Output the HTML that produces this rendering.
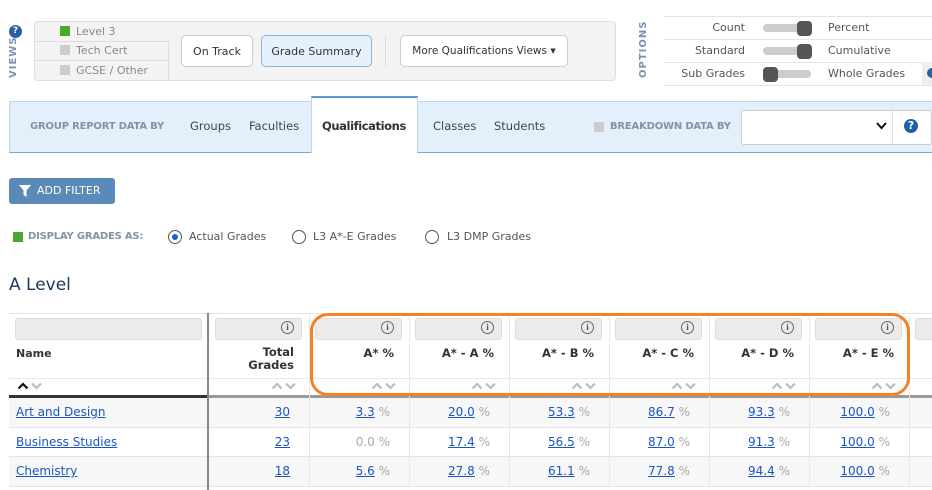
<!DOCTYPE html>
<html><head><meta charset="utf-8"><style>
*{box-sizing:border-box;margin:0;padding:0}
body{width:932px;height:490px;overflow:hidden;background:#fff;font-family:Verdana,"DejaVu Sans",sans-serif;font-size:11px;color:#333;position:relative}
.a{position:absolute}
.vt{position:absolute;transform:rotate(-90deg);transform-origin:left top;font-weight:bold;color:#7b93b3;font-size:10px;letter-spacing:1px}
.btn{position:absolute;top:35px;height:32px;border:1px solid #ccc;border-radius:5px;background:#fff;display:flex;align-items:center;justify-content:center;font-size:11px;color:#333}
.row3{position:absolute;left:664px;width:268px;height:23px;border-top:1px solid #e4e4e4}
.lbl{position:absolute;right:187px;top:4px;color:#555}
.tg{position:absolute;left:99px;top:7px;width:48px;height:8px;border-radius:4px;background:#ccc}
.kn{position:absolute;top:-3px;width:15px;height:15px;border-radius:4px;background:#555}
.rl{position:absolute;left:164px;top:4px;color:#555}
.tab{position:absolute;top:119px;color:#444;font-size:11.5px}
.sq{position:absolute;width:10px;height:10px}
.radio{position:absolute;top:230px;width:14px;height:14px;border-radius:50%;border:1px solid #555;background:#fff}
.col{position:absolute;top:313px;height:173px;border-left:1px solid #e8e8e8}
.fb{position:absolute;top:318px;height:22px;background:#ebebeb;border:1px solid #ddd;border-radius:3px}
.ic{position:absolute;top:321px;width:13px;height:13px;border:1px solid #666;border-radius:50%;font:bold 9px "Liberation Serif",serif;color:#555;text-align:center;line-height:11px}
.ht{position:absolute;top:346px;font-weight:bold;font-size:11.5px;color:#333;text-align:right}
.ar{position:absolute;top:382px}
.v{position:absolute;text-align:right;font-size:12px}
.v a{color:#1a56c4;text-decoration:underline}
.v span{color:#aaa}
.nm{position:absolute;left:16px;font-size:12px;color:#1a56c4;text-decoration:underline}
.bl{font-weight:bold;color:#8492a3;font-size:10px}
</style></head><body>

<div class="a" style="left:9px;top:25px;width:13px;height:13px;border-radius:50%;background:#2c5f9e;color:#fff;font-size:9px;font-weight:bold;text-align:center;line-height:13px">?</div>
<div class="vt" style="left:8px;top:78px">VIEWS</div>
<div class="a" style="left:34px;top:21px;width:582px;height:60px;background:#f3f3f3;border:1px solid #ddd;border-radius:4px"></div>
<div class="a" style="left:35px;top:41px;width:134px;height:1px;background:#ddd"></div>
<div class="a" style="left:35px;top:60px;width:134px;height:1px;background:#ddd"></div>
<div class="a" style="left:168px;top:41px;width:1px;height:39px;background:#ddd"></div>
<div class="sq" style="left:60px;top:26px;background:#4aa82a"></div>
<div class="a" style="left:76px;top:25px;color:#888">Level 3</div>
<div class="sq" style="left:60px;top:45px;background:#ccc"></div>
<div class="a" style="left:76px;top:44px;color:#888">Tech Cert</div>
<div class="sq" style="left:60px;top:65px;background:#ccc"></div>
<div class="a" style="left:76px;top:64px;color:#888">GCSE / Other</div>
<div class="btn" style="left:181px;width:72px">On Track</div>
<div class="btn" style="left:261px;width:111px;background:#e6f1fc;border-color:#8ab4e8">Grade Summary</div>
<div class="a" style="left:385px;top:35px;width:1px;height:32px;background:#ddd"></div>
<div class="btn" style="left:400px;width:168px;font-size:10.5px">More Qualifications Views&nbsp;<span style="font-size:7px">▼</span></div>

<div class="vt" style="left:638px;top:78px">OPTIONS</div>
<div class="row3" style="top:16px"><div class="lbl">Count</div><div class="tg"><div class="kn" style="left:34px"></div></div><div class="rl">Percent</div></div>
<div class="row3" style="top:39px"><div class="lbl">Standard</div><div class="tg"><div class="kn" style="left:34px"></div></div><div class="rl">Cumulative</div></div>
<div class="row3" style="top:62px"><div class="lbl">Sub Grades</div><div class="tg"><div class="kn" style="left:0"></div></div><div class="rl">Whole Grades</div></div>
<div class="a" style="left:664px;top:85px;width:268px;height:1px;background:#e4e4e4"></div>
<div class="a" style="left:922px;top:62px;width:10px;height:23px;background:#eee"></div>
<div class="a" style="left:927px;top:68px;width:10px;height:10px;border-radius:50%;background:#2c5f9e"></div>

<div class="a" style="left:9px;top:101px;width:923px;height:52px;background:#e3f0fc;border-top:1px solid #bcd7f0;border-left:1px solid #bcd7f0;border-bottom:1px solid #7aa7db"></div>
<div class="a bl" style="left:30px;top:121px;letter-spacing:-0.2px">GROUP REPORT DATA BY</div>
<div class="tab" style="left:190px">Groups</div>
<div class="tab" style="left:249px">Faculties</div>
<div class="a" style="left:311px;top:96px;width:107px;height:57px;background:#fff;border-top:2px solid #5b96d8;border-left:1px solid #bcd7f0;border-right:1px solid #bcd7f0"></div>
<div class="tab" style="left:322px;font-weight:bold;color:#333;letter-spacing:-0.4px">Qualifications</div>
<div class="tab" style="left:433px">Classes</div>
<div class="tab" style="left:494px">Students</div>
<div class="sq" style="left:594px;top:122px;background:#ccc"></div>
<div class="a bl" style="left:610px;top:121px;letter-spacing:-0.2px">BREAKDOWN DATA BY</div>
<div class="a" style="left:741px;top:110px;width:191px;height:35px;background:#fff;border:1px solid #ccc;border-radius:3px"></div>
<svg class="a" style="left:876px;top:122px" width="11" height="8"><path d="M1 1l4.5 5 4.5-5" stroke="#111" stroke-width="2" fill="none"/></svg>
<div class="a" style="left:892px;top:111px;width:1px;height:33px;background:#ddd"></div>
<div class="a" style="left:904px;top:119px;width:14px;height:14px;border-radius:50%;background:#1f5fa8;color:#fff;font-weight:bold;font-size:11px;text-align:center;line-height:14px">?</div>

<div class="a" style="left:9px;top:178px;width:106px;height:26px;background:#5a8ab8;border-radius:3px"></div>
<svg class="a" style="left:19px;top:185px" width="12" height="12"><path d="M0 0h12L7.5 5.5V12L4.5 10V5.5z" fill="#fff"/></svg>
<div class="a" style="left:37px;top:184px;color:#fff;font-size:11px">ADD FILTER</div>

<div class="sq" style="left:13px;top:232px;background:#4aa82a"></div>
<div class="a bl" style="left:28px;top:231px;letter-spacing:-0.2px">DISPLAY GRADES AS:</div>
<div class="radio" style="left:168px"><div class="a" style="left:3px;top:3px;width:6px;height:6px;border-radius:50%;background:#1f5fcf"></div></div>
<div class="a" style="left:189px;top:230px;color:#555;font-size:11px">Actual Grades</div>
<div class="radio" style="left:292px"></div>
<div class="a" style="left:313px;top:230px;color:#555;font-size:11px">L3 A*-E Grades</div>
<div class="radio" style="left:425px"></div>
<div class="a" style="left:447px;top:230px;color:#555;font-size:11px">L3 DMP Grades</div>

<div class="a" style="left:9px;top:275px;font-size:17px;color:#1a3a5c">A Level</div>

<div class="a" style="left:9px;top:313px;width:923px;height:1px;background:#e4e4e4"></div>
<div class="a" style="left:9px;top:378px;width:923px;height:1px;background:#e8e8e8"></div>
<div class="a" style="left:9px;top:398px;width:923px;height:29px;background:#f7f7f7"></div>
<div class="a" style="left:9px;top:456px;width:923px;height:30px;background:#f7f7f7"></div>
<div class="a" style="left:9px;top:427px;width:923px;height:1px;background:#e4e4e4"></div>
<div class="a" style="left:9px;top:456px;width:923px;height:1px;background:#e4e4e4"></div>
<div class="a" style="left:9px;top:486px;width:923px;height:1px;background:#e4e4e4"></div>
<div class="a" style="left:9px;top:395px;width:198px;height:3px;background:#333"></div>
<div class="a" style="left:209px;top:395px;width:723px;height:3px;background:#999"></div>
<div class="a" style="left:207px;top:313px;width:2px;height:177px;background:#888"></div>

<div class="fb" style="left:15px;width:187px"></div>
<div class="a" style="left:16px;top:347px;font-weight:bold;font-size:11px">Name</div>
<svg class="ar" style="left:17px" width="26" height="8"><path d="M1.5 6.5L6 2l4.5 4.5" stroke="#111" stroke-width="2.2" fill="none"/><path d="M15 1.5l4.5 4.5 4.5-4.5" stroke="#bbb" stroke-width="2.2" fill="none"/></svg>
<div class="nm" style="top:405px">Art and Design</div>
<div class="nm" style="top:435px">Business Studies</div>
<div class="nm" style="top:464px">Chemistry</div>

<div class="fb" style="left:215px;width:87px"></div>
<div class="ic" style="left:281px">i</div>
<div class="ht" style="left:209px;width:85px;line-height:13px">Total<br>Grades</div>
<svg class="ar" style="left:271px" width="26" height="8"><path d="M1.5 6.5L6 2l4.5 4.5M15 1.5l4.5 4.5 4.5-4.5" stroke="#bbb" stroke-width="2.2" fill="none"/></svg>
<div class="v" style="left:209px;width:81px;top:405px"><a>30</a></div>
<div class="v" style="left:209px;width:81px;top:435px"><a>23</a></div>
<div class="v" style="left:209px;width:81px;top:464px"><a>18</a></div>

<div class="col" style="left:309px"></div><div class="fb" style="left:315px;width:87px"></div><div class="ic" style="left:381px">i</div><div class="ht" style="left:309px;width:85px">A* %</div><svg class="ar" style="left:371px" width="26" height="8"><path d="M1.5 6.5L6 2l4.5 4.5M15 1.5l4.5 4.5 4.5-4.5" stroke="#bbb" stroke-width="2.2" fill="none"/></svg>
<div class="col" style="left:409px"></div><div class="fb" style="left:415px;width:87px"></div><div class="ic" style="left:481px">i</div><div class="ht" style="left:409px;width:85px">A* - A %</div><svg class="ar" style="left:471px" width="26" height="8"><path d="M1.5 6.5L6 2l4.5 4.5M15 1.5l4.5 4.5 4.5-4.5" stroke="#bbb" stroke-width="2.2" fill="none"/></svg>
<div class="col" style="left:509px"></div><div class="fb" style="left:515px;width:87px"></div><div class="ic" style="left:581px">i</div><div class="ht" style="left:509px;width:85px">A* - B %</div><svg class="ar" style="left:571px" width="26" height="8"><path d="M1.5 6.5L6 2l4.5 4.5M15 1.5l4.5 4.5 4.5-4.5" stroke="#bbb" stroke-width="2.2" fill="none"/></svg>
<div class="col" style="left:609px"></div><div class="fb" style="left:615px;width:87px"></div><div class="ic" style="left:681px">i</div><div class="ht" style="left:609px;width:85px">A* - C %</div><svg class="ar" style="left:671px" width="26" height="8"><path d="M1.5 6.5L6 2l4.5 4.5M15 1.5l4.5 4.5 4.5-4.5" stroke="#bbb" stroke-width="2.2" fill="none"/></svg>
<div class="col" style="left:709px"></div><div class="fb" style="left:715px;width:87px"></div><div class="ic" style="left:781px">i</div><div class="ht" style="left:709px;width:85px">A* - D %</div><svg class="ar" style="left:771px" width="26" height="8"><path d="M1.5 6.5L6 2l4.5 4.5M15 1.5l4.5 4.5 4.5-4.5" stroke="#bbb" stroke-width="2.2" fill="none"/></svg>
<div class="col" style="left:809px"></div><div class="fb" style="left:815px;width:87px"></div><div class="ic" style="left:881px">i</div><div class="ht" style="left:809px;width:85px">A* - E %</div><svg class="ar" style="left:871px" width="26" height="8"><path d="M1.5 6.5L6 2l4.5 4.5M15 1.5l4.5 4.5 4.5-4.5" stroke="#bbb" stroke-width="2.2" fill="none"/></svg>
<div class="col" style="left:909px"></div><div class="fb" style="left:915px;width:30px"></div>

<div class="v" style="left:309px;width:81px;top:405px"><a>3.3</a> <span>%</span></div>
<div class="v" style="left:309px;width:81px;top:435px"><span>0.0 %</span></div>
<div class="v" style="left:309px;width:81px;top:464px"><a>5.6</a> <span>%</span></div>
<div class="v" style="left:409px;width:81px;top:405px"><a>20.0</a> <span>%</span></div>
<div class="v" style="left:409px;width:81px;top:435px"><a>17.4</a> <span>%</span></div>
<div class="v" style="left:409px;width:81px;top:464px"><a>27.8</a> <span>%</span></div>
<div class="v" style="left:509px;width:81px;top:405px"><a>53.3</a> <span>%</span></div>
<div class="v" style="left:509px;width:81px;top:435px"><a>56.5</a> <span>%</span></div>
<div class="v" style="left:509px;width:81px;top:464px"><a>61.1</a> <span>%</span></div>
<div class="v" style="left:609px;width:81px;top:405px"><a>86.7</a> <span>%</span></div>
<div class="v" style="left:609px;width:81px;top:435px"><a>87.0</a> <span>%</span></div>
<div class="v" style="left:609px;width:81px;top:464px"><a>77.8</a> <span>%</span></div>
<div class="v" style="left:709px;width:81px;top:405px"><a>93.3</a> <span>%</span></div>
<div class="v" style="left:709px;width:81px;top:435px"><a>91.3</a> <span>%</span></div>
<div class="v" style="left:709px;width:81px;top:464px"><a>94.4</a> <span>%</span></div>
<div class="v" style="left:809px;width:81px;top:405px"><a>100.0</a> <span>%</span></div>
<div class="v" style="left:809px;width:81px;top:435px"><a>100.0</a> <span>%</span></div>
<div class="v" style="left:809px;width:81px;top:464px"><a>100.0</a> <span>%</span></div>

<div class="a" style="left:310px;top:313px;width:600px;height:83px;border:3px solid #f58025;border-radius:18px"></div>
</body></html>
